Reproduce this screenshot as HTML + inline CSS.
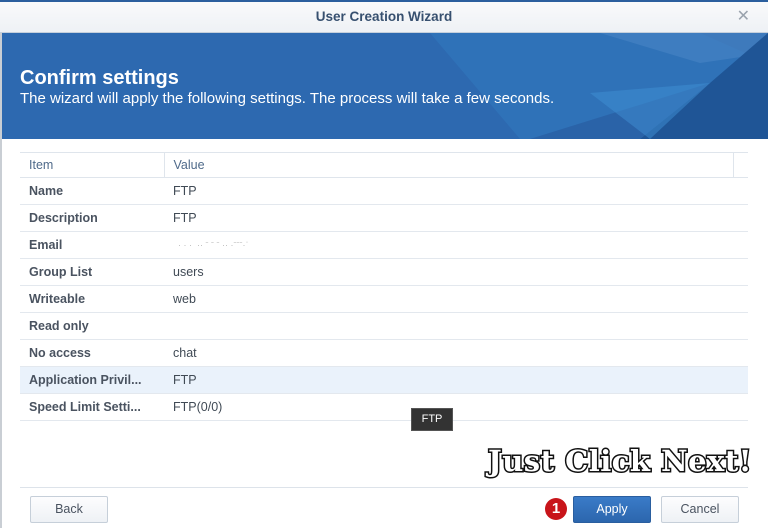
<!DOCTYPE html>
<html><head><style>
*{margin:0;padding:0;box-sizing:border-box}
body{width:768px;height:528px;overflow:hidden;background:#fff;font-family:"Liberation Sans",sans-serif;position:relative}
.top{position:absolute;left:0;top:0;width:768px;height:33px;background:linear-gradient(#f9fafb,#eef1f5);border-top:2px solid #2b5f9e;border-bottom:1px solid #c5d0dc;text-align:center;font-size:13.5px;font-weight:bold;color:#37506f;line-height:30px}
.x{position:absolute;right:18px;top:0;color:#9aa3ad;font-weight:normal;font-size:16px}
.ban{position:absolute;left:0;top:33px;width:768px;height:106px;background:#2d69b0;overflow:hidden;color:#fff}
.ban h1{position:absolute;left:20px;top:34px;font-size:20px}
.ban p{position:absolute;left:20px;top:57px;font-size:15px}
table{position:absolute;left:20px;top:152px;width:728px;border-collapse:collapse;font-size:12.5px}
td{height:27px;border-bottom:1px solid #e3e8ee;padding-left:9px;color:#404a55}
td:first-child{width:144px;font-weight:bold;color:#4a5360;white-space:nowrap}
tr.h td{height:26px;border-top:1px solid #dfe5ec;font-weight:normal;color:#4f6a8a;border-bottom:1px solid #dfe5ec}
tr.h td+td{border-left:1px solid #dfe5ec}
tr.sel td{background:#eaf2fb}
.tip{position:absolute;left:411px;top:408px;width:42px;height:23px;background:#333;border:1px solid #555;color:#fff;font-size:11px;text-align:center;line-height:21px}
.jc{position:absolute;left:488px;top:445px;font-family:"DejaVu Serif",serif;font-weight:bold;font-size:29px;color:#fff;letter-spacing:0.5px;-webkit-text-stroke:3px #111;paint-order:stroke fill;white-space:nowrap;line-height:32px}
.foot{position:absolute;left:20px;top:487px;width:728px;border-top:1px solid #dde3ea}
.btn{position:absolute;top:496px;height:27px;border:1px solid #c6cfd9;border-radius:2px;background:linear-gradient(#fdfdfe,#eef1f5);font-size:12.5px;color:#4a5360;text-align:center;line-height:25px}
.ap{background:linear-gradient(#3a7bc8,#2c66ad);border-color:#2a5e9f;color:#fff}
.dot{position:absolute;left:545px;top:498px;width:22px;height:22px;border-radius:50%;background:#c8141a;color:#fff;font-weight:bold;font-size:15px;text-align:center;line-height:22px}
.lb{position:absolute;left:0;top:33px;width:2px;height:495px;background:#c9ced4}
</style></head><body>
<div class="top">User Creation Wizard<span class="x">✕</span></div>
<div class="ban">
<svg width="768" height="106" style="position:absolute;left:0;top:0">
<polygon points="430,0 700,0 768,30 768,106 520,106" fill="#2f72b8"/>
<polygon points="600,0 768,0 768,20 700,30" fill="#4a86c4" opacity=".6"/>
<polygon points="710,50 768,0 768,106 640,106" fill="#1f5596"/>
<polygon points="710,50 640,106 530,106" fill="#2a63a8"/>
<polygon points="590,60 710,50 650,106" fill="#3f8fd4" opacity=".5"/>
</svg>
<h1>Confirm settings</h1><p>The wizard will apply the following settings. The process will take a few seconds.</p></div>
<div class="lb"></div>
<table>
<tr class="h"><td style="height:25px">Item</td><td style="border-right:1px solid #dfe5ec;width:569px;height:25px">Value</td><td style="border-left:1px solid #dfe5ec;height:25px"></td></tr>
<tr><td style="height:26px">Name</td><td colspan="2">FTP</td></tr>
<tr><td style="height:26px">Description</td><td colspan="2">FTP</td></tr>
<tr><td style="height:26px">Email</td><td colspan="2" style="color:#bbb;font-size:9px">&nbsp; · · ·&nbsp; ·· ˉ ˉ ˉ ·· ·ˉˉˉ·ˈ</td></tr>
<tr><td style="height:26px">Group List</td><td colspan="2">users</td></tr>
<tr><td style="height:26px">Writeable</td><td colspan="2">web</td></tr>
<tr><td style="height:26px">Read only</td><td colspan="2"></td></tr>
<tr><td style="height:26px">No access</td><td colspan="2">chat</td></tr>
<tr class="sel"><td style="height:26px">Application Privil...</td><td colspan="2">FTP</td></tr>
<tr><td style="height:26px">Speed Limit Setti...</td><td colspan="2">FTP(0/0)</td></tr>
</table>
<div class="tip">FTP</div>
<div class="jc">Just Click Next!</div>
<div class="foot"></div>
<div class="btn" style="left:30px;width:78px">Back</div>
<div class="dot">1</div>
<div class="btn ap" style="left:573px;width:78px">Apply</div>
<div class="btn" style="left:661px;width:78px">Cancel</div>
</body></html>
